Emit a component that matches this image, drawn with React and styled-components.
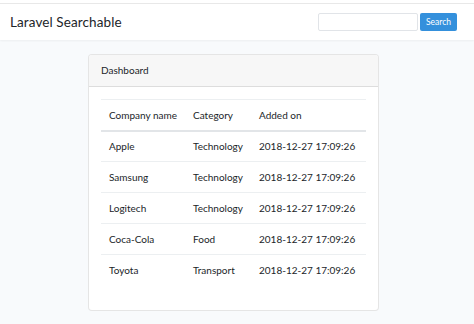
import React from "react";
import styled, { createGlobalStyle } from "styled-components";

const Global = createGlobalStyle`
  html, body { margin: 0; padding: 0; background: #f8fafc; }
  body { font-family: Lato, "Noto Sans", sans-serif; color: #212529; }
  * { box-sizing: border-box; }
`;

const TopStrip = styled.div`
  height: 3px;
  background: #fff;
`;

const Navbar = styled.nav`
  display: flex;
  align-items: center;
  justify-content: space-between;
  height: 37px;
  background: #fff;
  border-top: 1px solid #e8e8e8;
  box-shadow: 0 1px 2px rgba(0, 0, 0, 0.05);
  padding: 0 17px 0 10px;
`;

const Brand = styled.div`
  font-size: 13.5px;
  color: #212529;
  letter-spacing: 0.1px;
`;

const SearchForm = styled.form`
  display: flex;
  align-items: center;
  gap: 2px;
`;

const SearchInput = styled.input`
  width: 100px;
  height: 18px;
  border: 1px solid #e1e4e8;
  border-radius: 2px;
  background: #fff;
  outline: none;
`;

const SearchButton = styled.button`
  height: 18px;
  width: 37px;
  padding: 0;
  border: none;
  border-radius: 2px;
  background: #3490dc;
  color: #fff;
  font-family: Lato, "Noto Sans", sans-serif;
  font-size: 8.5px;
`;

const Main = styled.main`
  padding: 14px 0 0 88px;
`;

const Card = styled.section`
  width: 291px;
  background: #fff;
  border: 1px solid rgba(0, 0, 0, 0.1);
  border-radius: 4px;
  overflow: hidden;
`;

const CardHeader = styled.header`
  height: 32px;
  display: flex;
  align-items: center;
  padding: 0 12px 2px;
  background: #f7f7f7;
  border-bottom: 1px solid rgba(0, 0, 0, 0.1);
  font-size: 10px;
`;

const CardBody = styled.div`
  padding: 12px 12px 24px;
`;

const Table = styled.table`
  width: 265px;
  border-collapse: collapse;
  table-layout: fixed;
  font-size: 10px;
  color: #212529;
`;

const HeadCell = styled.th`
  text-align: left;
  font-weight: 400;
  height: 31px;
  padding: 0 8px;
  white-space: nowrap;
  border-top: 1px solid #eceff1;
  border-bottom: 2px solid #e2e5e8;
  width: ${(p) => p.$w || "auto"};
`;

const Cell = styled.td`
  height: 31px;
  padding: 0 8px;
  border-top: 1px solid #eceff1;
  white-space: nowrap;
`;

const rows = [
  ["Apple", "Technology"],
  ["Samsung", "Technology"],
  ["Logitech", "Technology"],
  ["Coca-Cola", "Food"],
  ["Toyota", "Transport"],
];

export default function App() {
  return (
    <>
      <Global />
      <TopStrip />
      <Navbar>
        <Brand>Laravel Searchable</Brand>
        <SearchForm onSubmit={(e) => e.preventDefault()}>
          <SearchInput type="text" />
          <SearchButton type="submit">Search</SearchButton>
        </SearchForm>
      </Navbar>
      <Main>
        <Card>
          <CardHeader>Dashboard</CardHeader>
          <CardBody>
            <Table>
              <thead>
                <tr>
                  <HeadCell $w="84px">Company name</HeadCell>
                  <HeadCell $w="66px">Category</HeadCell>
                  <HeadCell>Added on</HeadCell>
                </tr>
              </thead>
              <tbody>
                {rows.map(([name, cat]) => (
                  <tr key={name}>
                    <Cell>{name}</Cell>
                    <Cell>{cat}</Cell>
                    <Cell>2018-12-27 17:09:26</Cell>
                  </tr>
                ))}
              </tbody>
            </Table>
          </CardBody>
        </Card>
      </Main>
    </>
  );
}
